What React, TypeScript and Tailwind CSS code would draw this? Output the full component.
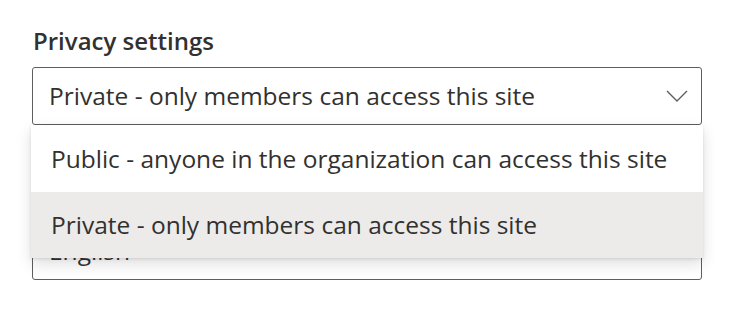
const options = [
    "Public - anyone in the organization can access this site",
    "Private - only members can access this site",
];

const Chevron = () => (
    <svg width="22" height="12" viewBox="0 0 22 12" fill="none" className="shrink-0">
        <polyline points="1,1 11,11 21,1" stroke="#605e5c" strokeWidth="1.4" />
    </svg>
);

const App = () => {
    const selected = 1;

    return (
        <div
            className="w-[730px] h-[311px] bg-white text-[#323130] overflow-hidden"
            style={{ fontFamily: '"Open Sans", "Noto Sans", sans-serif' }}
        >
            <div className="pl-[32px] pt-[25px] w-[702px] flex flex-col">
                <label className="text-[24px] leading-[32px] font-semibold pl-[1px] mb-[10px]">
                    Privacy settings
                </label>

                <div className="relative">
                    <div className="h-[58px] border-[1.5px] border-[#605e5c] rounded-[3px] flex items-center justify-between pl-[16px] pr-[13px]">
                        <span className="text-[24.5px] leading-[32px]">{options[selected]}</span>
                        <Chevron />
                    </div>

                    {/* open dropdown menu */}
                    <div className="absolute z-10 left-[-1px] right-[-1px] top-[58px] bg-white shadow-[0_6px_14px_rgba(0,0,0,0.13),0_1px_3px_rgba(0,0,0,0.11)]">
                        {options.map((opt, i) => (
                            <div
                                key={opt}
                                className={
                                    i === selected
                                        ? "h-[66px] flex items-center pl-[20px] text-[24.5px] leading-[32px] bg-[#edebe9]"
                                        : "h-[67px] flex items-center pl-[20px] text-[24.5px] leading-[32px]"
                                }
                            >
                                {opt}
                            </div>
                        ))}
                    </div>
                </div>

                {/* language field, mostly hidden by the open menu */}
                <div className="mt-[97px] h-[58px] border-[1.5px] border-[#605e5c] rounded-[3px] flex items-center pl-[16px]">
                    <span className="text-[24.5px] leading-[32px]">English</span>
                </div>
            </div>
        </div>
    );
};

export default App;
